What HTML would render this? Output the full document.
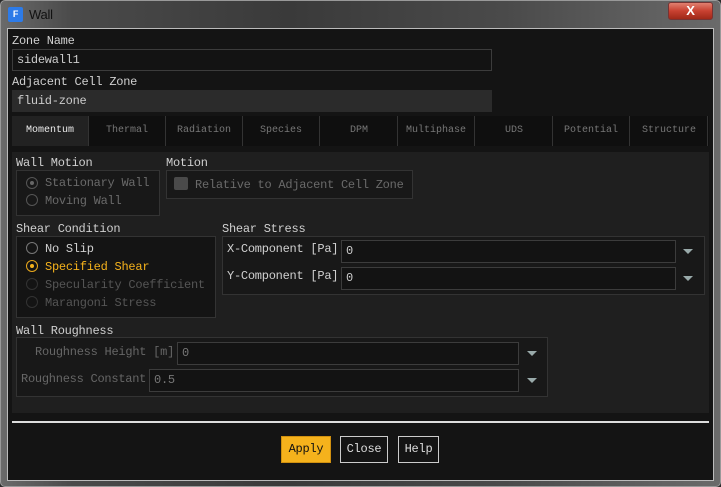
<!DOCTYPE html>
<html><head><style>
*{margin:0;padding:0;box-sizing:border-box}
body{width:721px;height:487px;background:#2a2a2a;font-family:"Liberation Mono","Noto Sans CJK SC",monospace;font-size:12px;letter-spacing:-0.25px;color:#d0d0d0;position:relative;overflow:hidden}
.a{position:absolute}
.win{left:0;top:0;width:721px;height:487px;border:1px solid #999;border-radius:5px;background:linear-gradient(90deg,#6a6a6a 0%,#4a4a4a 10%,#3a3a3a 40%,#4a4a4a 70%,#6a6a6a 100%)}
.client{left:7px;top:28px;width:707px;height:453px;background:#141414;border:1px solid #bbb}
.box{border:1px solid #333}
.lbl{white-space:nowrap;line-height:14px}
.inp{background:#131313;border:1px solid #3c3c3c;color:#ccc;padding-left:4px;line-height:20px}
.tab{top:116px;height:30px;width:77px;background:#0f0f0f;border-right:1px solid #333;color:#777;font-size:10px;text-align:center;line-height:30px;letter-spacing:0}
.rad{width:12px;height:12px;border:1px solid #777;border-radius:50%}
.arr{width:0;height:0;border-left:5px solid transparent;border-right:5px solid transparent;border-top:5px solid #9aa}
.btn{top:436px;height:27px;border:1px solid #ccc;color:#ddd;text-align:center;line-height:25px}
</style></head><body>
<div class="a win"></div>
<div class="a" style="left:8px;top:7px;width:15px;height:15px;background:#2d7be8;color:#fff;font:bold 9px 'Liberation Sans',sans-serif;line-height:15px;text-align:center;border-radius:2px">F</div>
<div class="a lbl" style="left:29px;top:7px;color:#111;font:13px 'Liberation Sans',sans-serif">Wall</div>
<div class="a" style="left:668px;top:2px;width:45px;height:18px;background:linear-gradient(#e08070,#c84030 50%,#a02818);border:1px solid #733;border-radius:3px;color:#fff;text-align:center;font:bold 13px 'Liberation Sans',sans-serif;line-height:16px">X</div>
<div class="a client"></div>
<div class="a lbl" style="left:12px;top:34px">Zone Name</div>
<div class="a inp" style="left:12px;top:49px;width:480px;height:22px">sidewall1</div>
<div class="a lbl" style="left:12px;top:75px">Adjacent Cell Zone</div>
<div class="a inp" style="left:12px;top:90px;width:480px;height:22px;background:#2b2b2b;border-color:#2b2b2b">fluid-zone</div>
<div class="a" style="left:12px;top:116px;width:697px;height:30px;background:#0f0f0f"></div>
<div class="a tab" style="left:12px;background:#222;color:#eee">Momentum</div>
<div class="a tab" style="left:89px">Thermal</div>
<div class="a tab" style="left:166px">Radiation</div>
<div class="a tab" style="left:243px">Species</div>
<div class="a tab" style="left:321px">DPM</div>
<div class="a tab" style="left:398px">Multiphase</div>
<div class="a tab" style="left:476px">UDS</div>
<div class="a tab" style="left:553px">Potential</div>
<div class="a tab" style="left:631px">Structure</div>
<div class="a" style="left:12px;top:152px;width:697px;height:261px;background:#1f1f1f"></div>
<div class="a lbl" style="left:16px;top:156px">Wall Motion</div>
<div class="a box" style="left:16px;top:170px;width:144px;height:46px;background:#181818"></div>
<div class="a rad" style="left:26px;top:177px;border-color:#555"><div style="width:4px;height:4px;background:#666;border-radius:50%;margin:3px"></div></div>
<div class="a lbl" style="left:45px;top:176px;color:#6a6a6a">Stationary Wall</div>
<div class="a rad" style="left:26px;top:194px;border-color:#555"></div>
<div class="a lbl" style="left:45px;top:194px;color:#6a6a6a">Moving Wall</div>
<div class="a lbl" style="left:166px;top:156px">Motion</div>
<div class="a box" style="left:166px;top:170px;width:247px;height:29px;background:#181818"></div>
<div class="a" style="left:174px;top:177px;width:14px;height:13px;background:#4a4a4a;border-radius:2px"></div>
<div class="a lbl" style="left:195px;top:178px;color:#6a6a6a">Relative to Adjacent Cell Zone</div>
<div class="a lbl" style="left:16px;top:222px">Shear Condition</div>
<div class="a box" style="left:16px;top:236px;width:200px;height:82px;background:#141414"></div>
<div class="a rad" style="left:26px;top:242px"></div>
<div class="a lbl" style="left:45px;top:242px">No Slip</div>
<div class="a rad" style="left:26px;top:260px;border-color:#e8a71c"><div style="width:4px;height:4px;background:#f5b21c;border-radius:50%;margin:3px"></div></div>
<div class="a lbl" style="left:45px;top:260px;color:#f5b21c">Specified Shear</div>
<div class="a rad" style="left:26px;top:278px;border-color:#333"></div>
<div class="a lbl" style="left:45px;top:278px;color:#555">Specularity Coefficient</div>
<div class="a rad" style="left:26px;top:296px;border-color:#333"></div>
<div class="a lbl" style="left:45px;top:296px;color:#555">Marangoni Stress</div>
<div class="a lbl" style="left:222px;top:222px">Shear Stress</div>
<div class="a box" style="left:222px;top:236px;width:483px;height:59px;background:#181818"></div>
<div class="a lbl" style="left:227px;top:242px">X-Component [Pa]</div>
<div class="a inp" style="left:341px;top:240px;width:335px;height:23px">0</div>
<div class="a arr" style="left:683px;top:249px"></div>
<div class="a lbl" style="left:227px;top:269px">Y-Component [Pa]</div>
<div class="a inp" style="left:341px;top:267px;width:335px;height:23px">0</div>
<div class="a arr" style="left:683px;top:276px"></div>
<div class="a lbl" style="left:16px;top:324px">Wall Roughness</div>
<div class="a box" style="left:16px;top:337px;width:532px;height:60px;background:#181818"></div>
<div class="a lbl" style="left:35px;top:345px;color:#666">Roughness Height [m]</div>
<div class="a inp" style="left:177px;top:342px;width:342px;height:23px;color:#777">0</div>
<div class="a arr" style="left:527px;top:351px"></div>
<div class="a lbl" style="left:21px;top:372px;color:#666">Roughness Constant</div>
<div class="a inp" style="left:149px;top:369px;width:370px;height:23px;color:#777">0.5</div>
<div class="a arr" style="left:527px;top:378px"></div>
<div class="a" style="left:12px;top:421px;width:697px;height:2px;background:#ddd"></div>
<div class="a btn" style="left:281px;width:50px;background:#f5b21c;border-color:#d09010;color:#111">Apply</div>
<div class="a btn" style="left:340px;width:48px">Close</div>
<div class="a btn" style="left:398px;width:41px">Help</div>
</body></html>
